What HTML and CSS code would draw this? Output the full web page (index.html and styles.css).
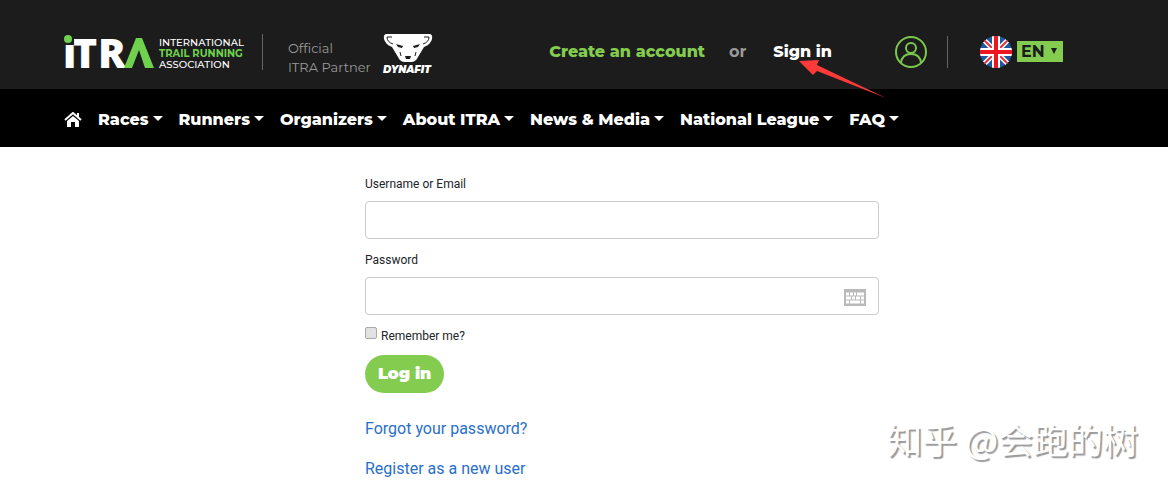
FILE: index.html
```html
<!DOCTYPE html>
<html lang="en">
	<head>
		<meta charset="UTF-8">
		<meta name="viewport" content="width=device-width, initial-scale=1.0">
		<title>Log in - ITRA</title>
		<link rel="stylesheet" href="styles.css">
	</head>
	<body>

		<header class="topbar">
			<div class="brand">
				<a href="#" class="logo">
					<svg width="90" height="36" viewBox="0 0 90 36">
						<text class="logo-letters" x="-1 9 34" y="34">iTR</text>
						<rect class="logo-mask" x="-1" y="0" width="11" height="10" />
						<circle class="logo-green" cx="4" cy="5" r="4" />
						<path class="logo-green" d="M60 34 L72 4 H78 L90 34 H81 L75 16 L68 34 Z" />
					</svg>
					<span class="logo-text">INTERNATIONAL<br><b>TRAIL RUNNING</b><br>ASSOCIATION</span>
				</a>
				<div class="partner">
					<p>Official<br>ITRA Partner</p>
					<a href="#" aria-label="Dynafit">
						<svg width="52" height="42" viewBox="0 0 52 42">
							<path fill="#fff" d="M5 1 H47 Q51 1 50 6 Q49 11 42 14 L36 24 Q34 29 29 29 H23 Q18 29 16 24 L10 14 Q3 11 2 6 Q1 1 5 1 Z" />
							<path fill="none" stroke="#1c1c1c" d="M10 4 H5 Q5 9 11 11 M42 4 H47 Q47 9 41 11 M18 19 L19 23 M34 19 L33 23" />
							<path fill="#1c1c1c" d="M14 11 L21 13 L20 15 L16 14 Z M38 11 L31 13 L32 15 L36 14 Z M23 23 H29 L28 26 H24 Z" />
							<text class="dynafit-name" x="1" y="40">DYNAFIT</text>
						</svg>
					</a>
				</div>
			</div>

			<div class="account">
				<a href="#" class="create">Create an account</a>
				<span class="or">or</span>
				<a href="#" class="signin">Sign in
					<svg class="arrow" width="88" height="39" viewBox="0 0 88 39">
						<path fill="#fc3a3a" d="M0 1 L20 0 L18 5 L87 38 L18 11 L14 15 Z" />
					</svg>
				</a>
				<a href="#" class="profile" aria-label="Profile">
					<svg width="32" height="32" viewBox="0 0 32 32" fill="none" stroke="#7cc84e" stroke-width="2">
						<circle cx="16" cy="16" r="15" />
						<circle cx="16" cy="12" r="5" />
						<path d="M6 27 Q7 18 16 18 Q25 18 26 27" />
					</svg>
				</a>
				<div class="language">
					<svg width="32" height="32" viewBox="0 0 32 32">
						<clipPath id="round"><circle cx="16" cy="16" r="16" /></clipPath>
						<g clip-path="url(#round)">
							<rect width="32" height="32" fill="#1e5aa0" />
							<path stroke="#fff" stroke-width="5" d="M2 2 L30 30 M30 2 L2 30" />
							<path stroke="#e0303a" stroke-width="2" d="M2 2 L30 30 M30 2 L2 30" />
							<path stroke="#fff" stroke-width="8" d="M16 0 V32 M0 16 H32" />
							<path stroke="#ee1620" stroke-width="4" d="M16 0 V32 M0 16 H32" />
						</g>
					</svg>
					<div class="select">
						<select aria-label="Language">
							<option>EN</option>
						</select>
					</div>
				</div>
			</div>
		</header>

		<nav class="menu">
			<a href="#" aria-label="Home">
				<svg width="18" height="15" viewBox="0 0 18 15">
					<path fill="#fff" d="M9 4 L15 9 V15 H11 V10 H7 V15 H3 V9 Z" />
					<path fill="none" stroke="#fff" stroke-width="2" d="M1 8 L9 1 L17 8" />
					<path fill="#fff" d="M13 1 H15 V5 L13 4 Z" />
				</svg>
			</a>
			<button type="button">Races</button>
			<button type="button">Runners</button>
			<button type="button">Organizers</button>
			<button type="button">About ITRA</button>
			<button type="button">News &amp; Media</button>
			<button type="button">National League</button>
			<button type="button">FAQ</button>
		</nav>

		<main class="login">
			<form>
				<label for="username">Username or Email</label>
				<input type="text" id="username" class="field">
				<label for="password">Password</label>
				<div class="password">
					<input type="password" id="password" class="field">
					<svg class="keyboard" width="22" height="17" viewBox="0 0 22 17">
						<rect width="22" height="17" fill="#b9b9b9" />
						<path stroke="#fff" stroke-width="3" d="M2 5 H5 M6 5 H9 M10 5 H12 M13 5 H20" />
						<path stroke="#fff" stroke-width="3" d="M2 9 H7 M8 9 H11 M12 9 H16 M17 9 H20" />
						<path stroke="#fff" stroke-width="3" d="M2 13 H5 M6 13 H16 M17 13 H20" />
					</svg>
				</div>
				<div class="remember">
					<input type="checkbox" id="remember">
					<label for="remember">Remember me?</label>
				</div>
				<button type="submit">Log in</button>
			</form>
			<p><a href="#">Forgot your password?</a></p>
			<p><a href="#">Register as a new user</a></p>
		</main>

		<div class="watermark">知乎 @会跑的树</div>

	</body>
</html>
```
FILE: styles.css
```css
* {
	box-sizing: border-box;
	margin: 0;
	padding: 0;
}
body {
	position: relative;
	background-color: #fff;
	color: #212529;
	font-family: Roboto, sans-serif;
	font-size: 16px;
	line-height: 24px;
}
a {
	text-decoration: none;
}
svg {
	display: block;
}

/* top bar */
.topbar {
	display: flex;
	justify-content: space-between;
	align-items: center;
	min-height: 89px;
	padding: 14px 9% 0 64px;
	background-color: #1c1c1c;
	font-family: Montserrat, Inter, sans-serif;
}
.brand, .logo, .partner, .account, .language {
	display: flex;
	align-items: center;
}
.logo {
	gap: 5px;
	padding-right: 18px;
	border-right: 1px solid #666;
	color: #fff;
}
.logo svg {
	overflow: visible;
}
.logo-letters {
	fill: #fff;
	font-family: "Open Sans", sans-serif;
	font-size: 41px;
	font-weight: 800;
}
.logo-mask {
	fill: #1c1c1c;
}
.logo-green {
	fill: #6fd14e;
}
.logo-text {
	padding-top: 3px;
	font-size: 10px;
	font-weight: 500;
	line-height: 11px;
}
.logo-text b {
	color: #6fd14e;
}
.partner {
	gap: 11px;
	padding-left: 25px;
}
.partner p {
	padding-top: 12px;
	color: #999;
	font-size: 13px;
	line-height: 19px;
}
.partner svg {
	margin-top: 4px;
}
.dynafit-name {
	fill: #fff;
	font-family: Montserrat, Inter, sans-serif;
	font-size: 10px;
	font-style: italic;
	font-weight: 900;
}
.account {
	font-weight: 800;
}
.create {
	color: #84cc50;
}
.or {
	margin: 0 27px 0 24px;
	color: #999;
	font-weight: 700;
}
.signin {
	position: relative;
	color: #fff;
}
.arrow {
	position: absolute;
	top: 20px;
	left: 26px;
}
.profile {
	margin-left: 63px;
	padding-right: 20px;
	border-right: 1px solid #666;
}
.language {
	gap: 5px;
	margin-left: 32px;
}
.select {
	position: relative;
}
.select::after {
	content: "";
	position: absolute;
	top: 7px;
	right: 6px;
	border: 3px solid transparent;
	border-top: 6px solid #1c1c1c;
	border-bottom: 0;
	pointer-events: none;
}
.select select {
	display: block;
	width: 46px;
	height: 21px;
	padding-left: 4px;
	border: none;
	background-color: #84cc50;
	color: #1c1c1c;
	font: 700 16px Montserrat, Inter, sans-serif;
	appearance: none;
}

/* menu */
.menu {
	display: flex;
	flex-wrap: wrap;
	align-items: center;
	gap: 16px;
	min-height: 58px;
	padding: 4px 64px 0;
	background-color: #000;
}
.menu svg {
	margin-bottom: 2px;
}
.menu button {
	display: flex;
	align-items: center;
	gap: 4px;
	border: none;
	background: none;
	color: #fff;
	font: 800 16px/24px Montserrat, Inter, sans-serif;
	cursor: pointer;
}
.menu button::after {
	content: "";
	margin-bottom: 4px;
	border: 5px solid transparent;
	border-top-color: #fff;
	border-bottom: 0;
}

/* login form */
.login {
	width: 44%;
	margin-left: 31.25%;
	padding: 28px 0 8px;
}
.login form {
	margin-bottom: 24px;
}
.login label {
	display: block;
	font-size: 12px;
	line-height: 18px;
}
.field {
	display: block;
	width: 100%;
	height: 38px;
	margin: 8px 0 12px;
	padding: 6px 12px;
	border: 1px solid #ccc;
	border-radius: 4px;
	font-size: 16px;
}
.password {
	position: relative;
}
.keyboard {
	position: absolute;
	top: 12px;
	right: 13px;
}
.remember {
	display: flex;
	gap: 4px;
}
.remember input {
	width: 12px;
	height: 12px;
	border: 1px solid #aaa;
	border-radius: 2px;
	background-color: #e2e2e2;
	appearance: none;
}
.remember input:checked {
	background-color: #84cc50;
}
.login button {
	margin-top: 10px;
	padding: 7px 13px;
	border: none;
	border-radius: 19px;
	background-color: #84cc50;
	color: #fff;
	font: 900 16px/24px Montserrat, Inter, sans-serif;
	cursor: pointer;
}
.login p {
	margin-bottom: 16px;
}
.login p a {
	color: #2a6fc9;
}

.watermark {
	position: absolute;
	right: 30px;
	bottom: 42px;
	color: #fff;
	font-family: "Noto Sans CJK SC", sans-serif;
	font-size: 35px;
	line-height: 48px;
	text-shadow: 2px 2px 1px #999;
}
```
